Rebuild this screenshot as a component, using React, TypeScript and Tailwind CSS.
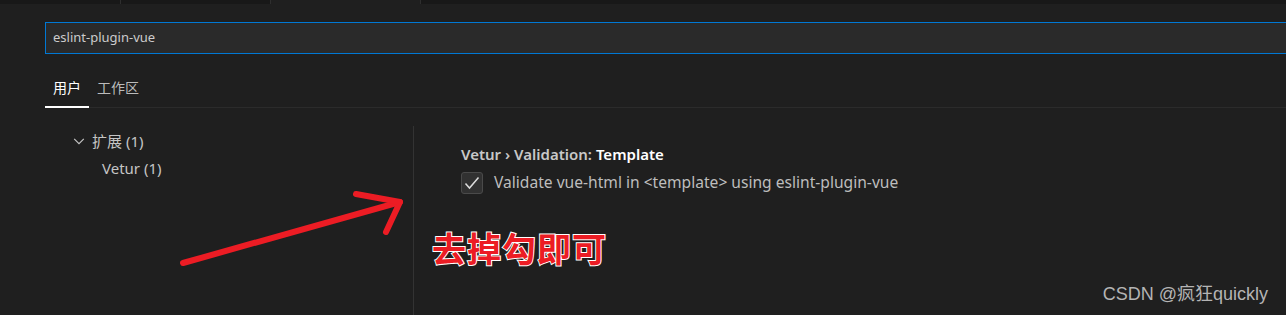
import React from "react";

const font = { fontFamily: '"Noto Sans", "Noto Sans CJK SC", sans-serif' };

const TopStrip: React.FC = () => (
  <div className="flex h-[4px] bg-[#181818]">
    <div className="w-[121px] border-r border-[#2e2e2e]" />
    <div className="w-[150px] border-r border-[#2e2e2e]" />
    <div className="w-[150px] bg-[#1f1f1f] border-r border-[#2e2e2e]" />
    <div className="flex-1" />
  </div>
);

const Tree: React.FC = () => (
  <div className="w-[368px] pt-[2px] text-[15px] text-[#c5c5c5]">
    <div className="flex items-center h-[26px] pl-[27px]">
      <svg width="14" height="14" viewBox="0 0 16 16" className="mr-[6px]">
        <path d="M2.5 5.5l5.5 5.5 5.5-5.5" fill="none" stroke="#c5c5c5" strokeWidth="1.3" />
      </svg>
      <span>扩展 (1)</span>
    </div>
    <div className="flex items-center h-[26px] pl-[57px] mt-[1px]">Vetur (1)</div>
  </div>
);

const Setting: React.FC = () => (
  <div className="flex-1 border-l border-[#333333] pl-[47px] pt-[18px]">
    <div className="text-[15px] font-semibold text-[#c8c8c8] h-[20px] leading-[20px]">
      Vetur › Validation: <span className="text-white">Template</span>
    </div>
    <div className="flex items-center mt-[7px] gap-[11px]">
      <div className="w-[22px] h-[22px] rounded-[3px] border border-[#4a4a4a] bg-[#313131] flex items-center justify-center">
        <svg width="18" height="18" viewBox="0 0 18 18">
          <path d="M2.5 9.5l4 4.5 9-10.5" fill="none" stroke="#dcdcdc" strokeWidth="1.5" />
        </svg>
      </div>
      <span className="text-[15.6px] text-[#bdbdbd]">
        Validate vue-html in &lt;template&gt; using eslint-plugin-vue
      </span>
    </div>
  </div>
);

export default function App() {
  return (
    <div className="relative w-[1286px] h-[315px] overflow-hidden bg-[#1f1f1f]" style={font}>
      <TopStrip />
      <div className="pl-[45px] pt-[18px]">
        <div className="h-[32px] border border-[#0078d4] bg-[#2a2a2a] flex items-center pl-[7px] text-[13px] text-[#cccccc] w-[1260px]">
          eslint-plugin-vue
        </div>
        <div className="flex mt-[14px] h-[40px] border-b border-[#2b2b2b] text-[14px]">
          <div className="flex items-center px-[8px] border-b-2 border-white text-white -mb-[1px]">用户</div>
          <div className="flex items-center px-[8px] text-[#bbbbbb]">工作区</div>
        </div>
        <div className="flex h-[189px] mt-[18px]">
          <Tree />
          <Setting />
        </div>
      </div>

      <svg className="absolute left-0 top-0" width="1286" height="315" viewBox="0 0 1286 315">
        <g stroke="#ec1c24" strokeWidth="6" strokeLinecap="round" fill="none">
          <path d="M183 263 L400 202" />
          <path d="M356 194 L400 202 L386 232" strokeLinejoin="round" />
        </g>
      </svg>

      <div
        className="absolute left-[432px] top-[224px] text-[34px] font-bold text-[#ec1c24] tracking-[1px]"
        style={{ WebkitTextStroke: "2px #ffffff", paintOrder: "stroke fill" }}
      >
        去掉勾即可
      </div>

      <div
        className="absolute right-[18px] bottom-[7px] text-[18px] text-[#b4b4b4]"
        style={{ fontFamily: '"Liberation Sans", "Noto Sans CJK SC", sans-serif' }}
      >
        CSDN @疯狂quickly
      </div>
    </div>
  );
}
